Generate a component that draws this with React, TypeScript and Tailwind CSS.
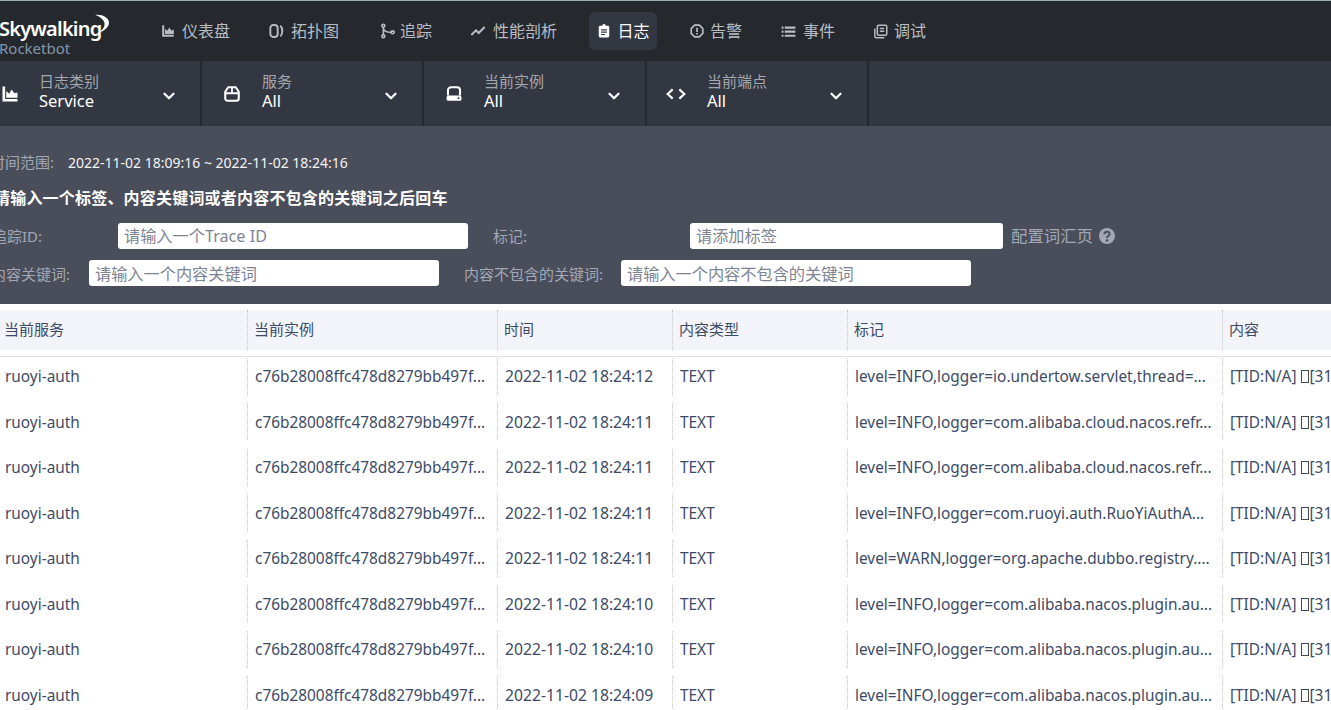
import { ChevronDown } from "lucide-react";

const font = { fontFamily: '"Noto Sans", "Noto Sans CJK SC", sans-serif' };

function IconChart({ size = 14 }: { size?: number }) {
  return (
    <svg width={size} height={size} viewBox="0 0 24 24" fill="currentColor">
      <path d="M2 2h3.500v16.500H22V22H2z" />
      <path d="M7 17V8l4 3.500L14 6l4 5 4-1v7z" />
    </svg>
  );
}

function IconTopo() {
  return (
    <svg width="16" height="16" viewBox="0 0 24 24" fill="none" stroke="currentColor" strokeWidth="2.8">
      <rect x="2" y="3" width="11" height="18" rx="4.5" />
      <path d="M17 4c4 4 4 12 0 16" />
    </svg>
  );
}

function IconTrace() {
  return (
    <svg width="16" height="16" viewBox="0 0 24 24" fill="none" stroke="currentColor" strokeWidth="2.4">
      <circle cx="5" cy="4" r="2.200" />
      <circle cx="5" cy="20" r="2.200" />
      <circle cx="19" cy="14" r="2.200" />
      <path d="M5 6v12M5 8c1 4 6 6 12 6" />
    </svg>
  );
}

function IconPulse() {
  return (
    <svg width="16" height="16" viewBox="0 0 24 24" fill="none" stroke="currentColor" strokeWidth="3">
      <path d="M2 18l7-7 4 4 9-9" />
    </svg>
  );
}

function IconClipboard() {
  return (
    <svg width="14" height="14" viewBox="0 0 24 24" fill="currentColor">
      <path fillRule="evenodd" d="M5 3h4a3 3 0 0 1 6 0h4a2 2 0 0 1 2 2v16a2 2 0 0 1-2 2H5a2 2 0 0 1-2-2V5a2 2 0 0 1 2-2zm2 6v2h10V9zm0 4v2h10v-2zm0 4v2h7v-2z" />
    </svg>
  );
}

function IconAlert() {
  return (
    <svg width="14" height="14" viewBox="0 0 24 24" fill="none" stroke="currentColor" strokeWidth="2.8">
      <path d="M8 2h8l6 6v8l-6 6H8l-6-6V8z" />
      <path d="M12 6.500v7M12 15.500v2.500" />
    </svg>
  );
}

function IconList() {
  return (
    <svg width="15" height="15" viewBox="0 0 24 24" fill="currentColor">
      <path d="M1 4h3v3.500H1zM6 4h17v3.500H6zM1 10.500h3V14H1zM6 10.500h17V14H6zM1 17h3v3.500H1zM6 17h17v3.500H6z" />
    </svg>
  );
}

function IconCopy() {
  return (
    <svg width="15" height="15" viewBox="0 0 24 24" fill="none" stroke="currentColor" strokeWidth="2.4">
      <rect x="7" y="2" width="15" height="16" rx="2" />
      <path d="M3 7v13a2 2 0 0 0 2 2h13M11 7h7M11 11.500h7" />
    </svg>
  );
}

function IconBox() {
  return (
    <svg width="18" height="18" viewBox="0 0 24 24" fill="none" stroke="currentColor" strokeWidth="2.8">
      <path d="M7 3h10l4 6v9a3 3 0 0 1-3 3H6a3 3 0 0 1-3-3V9z" />
      <path d="M3 11h18M12 4v7" strokeWidth="2.4" />
    </svg>
  );
}

function IconInstance() {
  return (
    <svg width="18" height="18" viewBox="0 0 24 24" fill="none" stroke="currentColor" strokeWidth="2.8">
      <path d="M4 14V7a4 4 0 0 1 4-4h8a4 4 0 0 1 4 4v7" />
      <rect x="2" y="14" width="20" height="7" rx="2.5" fill="currentColor" stroke="none" />
      <circle cx="18" cy="17.500" r="1.300" fill="#333742" stroke="none" />
    </svg>
  );
}

function IconCode() {
  return (
    <svg width="20" height="20" viewBox="0 0 24 24" fill="none" stroke="currentColor" strokeWidth="2.6">
      <path d="M8 6.500l-6 5.500 6 5.500M16 6.500l6 5.500-6 5.500" />
    </svg>
  );
}

function IconHelp() {
  return (
    <svg width="16" height="16" viewBox="0 0 24 24">
      <circle cx="12" cy="12" r="12" fill="#a3a7b5" />
      <path d="M8 9.500c0-5 8-5 8-.5 0 3-4 3-4 6" fill="none" stroke="#4a4d5a" strokeWidth="3" />
      <rect x="10.300" y="17" width="3.400" height="3.400" fill="#4a4d5a" />
    </svg>
  );
}

const navItems = [
  { label: "仪表盘", icon: <IconChart />, cls: "ml-[161px] gap-[7px]" },
  { label: "拓扑图", icon: <IconTopo />, cls: "ml-[39px] gap-[6px]" },
  { label: "追踪", icon: <IconTrace />, cls: "ml-[41px] gap-[4px]" },
  { label: "性能剖析", icon: <IconPulse />, cls: "ml-[38px] gap-[7px]" },
];

const navRest = [
  { label: "告警", icon: <IconAlert />, cls: "ml-[33px] gap-[6px]" },
  { label: "事件", icon: <IconList />, cls: "ml-[39px] gap-[7px]" },
  { label: "调试", icon: <IconCopy />, cls: "ml-[38px] gap-[6px]" },
];

function NavItem({ label, icon, cls }: { label: string; icon: React.ReactNode; cls: string }) {
  return (
    <div className={`flex items-center text-[16px] text-[#b9bcc4] ${cls}`}>
      {icon}
      <span>{label}</span>
    </div>
  );
}

const selectors = [
  { label: "日志类别", value: "Service", icon: <IconChart size={18} />, cls: "w-[202px] pl-[1px]", textCls: "ml-[20px]" },
  { label: "服务", value: "All", icon: <IconBox />, cls: "w-[222px] pl-[21px]", textCls: "ml-[21px]" },
  { label: "当前实例", value: "All", icon: <IconInstance />, cls: "w-[223px] pl-[21px]", textCls: "ml-[21px]" },
  { label: "当前端点", value: "All", icon: <IconCode />, cls: "w-[222px] pl-[19px]", textCls: "ml-[21px]" },
];

const rows = [
  ["18:24:12", "level=INFO,logger=io.undertow.servlet,thread=..."],
  ["18:24:11", "level=INFO,logger=com.alibaba.cloud.nacos.refr..."],
  ["18:24:11", "level=INFO,logger=com.alibaba.cloud.nacos.refr..."],
  ["18:24:11", "level=INFO,logger=com.ruoyi.auth.RuoYiAuthA..."],
  ["18:24:11", "level=WARN,logger=org.apache.dubbo.registry...."],
  ["18:24:10", "level=INFO,logger=com.alibaba.nacos.plugin.au..."],
  ["18:24:10", "level=INFO,logger=com.alibaba.nacos.plugin.au..."],
  ["18:24:09", "level=INFO,logger=com.alibaba.nacos.plugin.au..."],
];

const headers = [
  { label: "当前服务", w: "w-[250px]" },
  { label: "当前实例", w: "w-[250px]" },
  { label: "时间", w: "w-[175px]" },
  { label: "内容类型", w: "w-[175px]" },
  { label: "标记", w: "w-[375px]" },
  { label: "内容", w: "w-[375px]" },
];

function Cell({ w, first, children }: { w: string; first?: boolean; children: React.ReactNode }) {
  return (
    <div className={`${w} shrink-0 h-[37px] pt-[2px] pr-[7px] flex items-center border-dotted border-[#c4c4c4] ${first ? "pl-[8px]" : "pl-[7px] border-l"}`}>
      <span className="truncate">{children}</span>
    </div>
  );
}

export default function App() {
  return (
    <div className="w-[1331px] h-[710px] overflow-hidden bg-white" style={font}>
      <div className="h-[1px] bg-[#9fb0b5]" />
      <div className="h-[60px] bg-[#25292e] flex items-center relative">
        <div className="absolute left-[-1px] top-[14px] text-white leading-none">
          <div className="flex items-start">
            <span className="text-[20px] font-semibold tracking-[-0.8px] leading-[28px]">Skywalking</span>
            <svg width="16" height="20" viewBox="0 0 14 24" preserveAspectRatio="none" className="-ml-[7px] -mt-[1px]" fill="white">
              <path d="M1 1c8-1 13 5 12 11-1 5-4 8-8 10 3-4 5-7 4-12C8 6 5 3 1 1z" />
            </svg>
          </div>
          <div className="text-[15px] text-[#8296ab] leading-[15px] -mt-[2px]">Rocketbot</div>
        </div>
        {navItems.map((n) => (
          <NavItem key={n.label} {...n} />
        ))}
        <div className="ml-[32px] w-[68px] h-[38px] rounded-md bg-[#333742] flex items-center justify-center gap-[7px] text-[16px] text-white">
          <IconClipboard />
          <span>日志</span>
        </div>
        {navRest.map((n) => (
          <NavItem key={n.label} {...n} />
        ))}
      </div>

      <div className="h-[65px] bg-[#333742] flex">
        {selectors.map((s) => (
          <div key={s.label} className={`${s.cls} h-full flex items-center border-r-2 border-[#25292e] text-white`}>
            {s.icon}
            <div className={`${s.textCls} flex-1 leading-[19px] -mt-[6px]`}>
              <div className="text-[15px] text-[#a3a7b0]">{s.label}</div>
              <div className="text-[16.500px]">{s.value}</div>
            </div>
            <ChevronDown size={18} strokeWidth={3} className="mr-[22px] mt-[4px]" />
          </div>
        ))}
      </div>

      <div className="h-[178px] bg-[#4a4d5a] text-[15px] text-[#a3a7b5] -ml-[6px] pt-[26px]">
        <div className="flex items-center h-[20px]">
          <span className="-ml-[4px]">时间范围:</span>
          <span className="ml-[14px] text-[14px] text-[#f4f4f6]">2022-11-02 18:09:16 ~ 2022-11-02 18:24:16</span>
        </div>
        <div className="mt-[16px] h-[20px] flex items-center text-[16px] tracking-[0.2px] font-bold text-white">
          请输入一个标签、内容关键词或者内容不包含的关键词之后回车
        </div>
        <div className="mt-[15px] flex items-center h-[26px]">
          <span className="w-[122px] -ml-[2px] mr-[4px]">追踪ID:</span>
          <input placeholder="请输入一个Trace ID" className="w-[350px] h-[26px] bg-white rounded-[3px] px-[6px] text-[16.200px] placeholder:text-[#7d8494] outline-none" />
          <span className="ml-[25px] w-[197px]">标记:</span>
          <input placeholder="请添加标签" className="w-[313px] h-[26px] bg-white rounded-[3px] px-[6px] text-[16.200px] placeholder:text-[#7d8494] outline-none" />
          <span className="ml-[8px] text-[16.400px]">配置词汇页</span>
          <span className="ml-[6px]"><IconHelp /></span>
        </div>
        <div className="mt-[11px] flex items-center h-[26px]">
          <span className="w-[95px] -ml-[3px] mr-[3px] pt-[2px] whitespace-nowrap">内容关键词:</span>
          <input placeholder="请输入一个内容关键词" className="w-[350px] h-[26px] bg-white rounded-[3px] px-[6px] pt-[2px] text-[16.200px] placeholder:text-[#7d8494] outline-none" />
          <span className="ml-[25px] w-[157px] pt-[2px] whitespace-nowrap">内容不包含的关键词:</span>
          <input placeholder="请输入一个内容不包含的关键词" className="w-[350px] h-[26px] bg-white rounded-[3px] px-[6px] pt-[2px] text-[16.200px] placeholder:text-[#7d8494] outline-none" />
        </div>
      </div>

      <div className="-ml-[3px] text-[15.400px] text-[#3d4a66]">
        <div className="mt-[6px] h-[40px] bg-[#f3f4f9] flex w-[1600px] text-[15px]">
          {headers.map((h, i) => (
            <div key={h.label} className={`${h.w} shrink-0 h-full pb-[1px] flex items-center border-dotted border-[#c4c4c4] ${i ? "border-l pl-[6px]" : "pl-[7px]"}`}>
              {h.label}
            </div>
          ))}
        </div>
        <div className="mt-[6px] h-[1px] bg-[#e3e3e3] w-[1600px]" />
        <div className="pt-[0.500px]">
          {rows.map((r, i) => (
            <div key={i} className="h-[45.500px] flex w-[1600px]">
              <Cell w="w-[250px]" first>ruoyi-auth</Cell>
              <Cell w="w-[250px]">c76b28008ffc478d8279bb497f...</Cell>
              <Cell w="w-[175px]"><span className="text-[15.700px]">2022-11-02 {r[0]}</span></Cell>
              <Cell w="w-[175px]">TEXT</Cell>
              <Cell w="w-[375px]">{r[1]}</Cell>
              <Cell w="w-[375px]">
                [TID:N/A] <span className="inline-block w-[8px] h-[13px] border border-[#3d4a66] align-[-1px] mr-[1px]" />[31m
              </Cell>
            </div>
          ))}
        </div>
      </div>
    </div>
  );
}
